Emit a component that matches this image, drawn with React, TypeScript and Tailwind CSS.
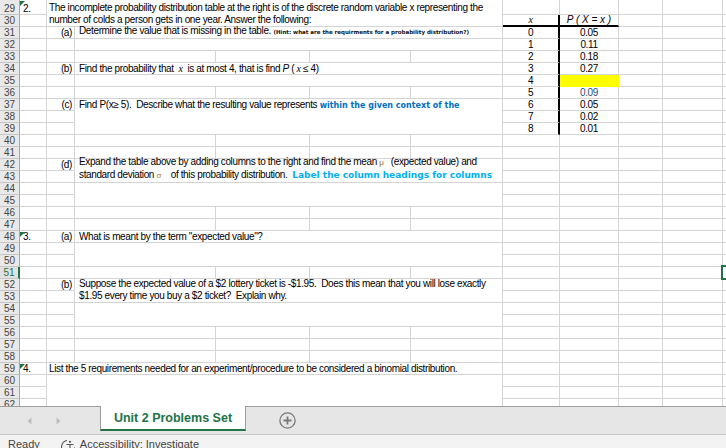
import React from 'react';

const CELL = 'box-border border-r border-b border-[#d4d4d4]';
const BOLD_BLUE = "font-['DejaVu_Sans',sans-serif] font-bold text-[8px] tracking-normal text-[#0070c0]";
const BOLD_CYAN = "font-['DejaVu_Sans',sans-serif] font-bold text-[9px] tracking-normal text-[#00b0f0]";
const HINT = "font-['DejaVu_Sans',sans-serif] font-bold text-[5.5px] tracking-normal text-[#111]";

function RowHeader({ n }: { n: number }) {
  if (n === 51) {
    return (
      <div className="box-border border-b border-[#c6c6c6] border-r-2 border-r-[#217346] bg-[#e1e1e1] text-[#217346] flex items-end justify-center leading-[11px] text-[10px] tracking-normal font-['Liberation_Sans',sans-serif]">
        {n}
      </div>
    );
  }
  return (
    <div className="box-border border-b border-r border-[#c6c6c6] border-r-[#a6a6a6] bg-[#e9e9e9] text-[#444] flex items-end justify-center leading-[11px] text-[10px] tracking-normal font-['Liberation_Sans',sans-serif]">
      {n}
    </div>
  );
}

function ColA({ n }: { n: number }) {
  const t = n === 29 ? '2.' : n === 48 ? '3.' : n === 59 ? '4.' : '';
  return (
    <div className={`${CELL} relative flex items-end pl-[3px] leading-[11px]`}>
      {t && (
        <span className="absolute left-0 top-[1px] w-0 h-0 border-t-[5px] border-r-[5px] border-t-[#217346] border-r-transparent" />
      )}
      {t}
    </div>
  );
}

function Empty() {
  return <div className={CELL} />;
}

function Label({ t }: { t: string }) {
  return <div className={`${CELL} flex items-end justify-end pr-[2px] leading-[11px] whitespace-pre`}>{t}</div>;
}

function Sep() {
  return (
    <>
      <Empty />
      <Empty />
      <Empty />
      <Empty />
      <Empty />
    </>
  );
}

const X = () => <i className="font-['Liberation_Serif',serif]">x</i>;
const P = () => <i>P</i>;

function BF({ n }: { n: number }) {
  switch (n) {
    case 29:
      return (
        <div className={`${CELL} col-span-5 row-span-2 flex flex-col justify-end pl-[2px] leading-[12px] whitespace-pre`}>
          <div>The incomplete probability distribution table at the right is of the discrete random variable x representing the</div>
          <div>number of colds a person gets in one year. Answer the following:</div>
        </div>
      );
    case 30:
    case 61:
    case 62:
      return null;
    case 31:
      return (
        <>
          <Label t="(a)" />
          <div className={`${CELL} col-span-4 flex items-end pl-[4px] leading-[11px] whitespace-pre`}>
            <span>
              Determine the value that is missing in the table.{' '}
              <span className={HINT}>(Hint: what are the requirments for a probability distribution?)</span>
            </span>
          </div>
        </>
      );
    case 32:
    case 35:
      return (
        <>
          <Empty />
          <div className={`${CELL} col-span-4`} />
        </>
      );
    case 34:
      return (
        <>
          <Label t="(b)" />
          <div className={`${CELL} col-span-4 flex items-end pl-[4px] leading-[11px] whitespace-pre`}>
            <span>
              Find the probability that  <X />  is at most 4, that is find <P /> ( <X /> ≤ 4)
            </span>
          </div>
        </>
      );
    case 37:
      return (
        <>
          <Label t="(c)" />
          <div className={`${CELL} col-span-4 row-span-3 pl-[4px] leading-[11px] whitespace-pre`}>
            <span>
              Find P(x≥ 5).  Describe what the resulting value represents{' '}
              <span className={BOLD_BLUE}>within the given context of the</span>
            </span>
          </div>
        </>
      );
    case 38:
    case 39:
    case 43:
    case 45:
    case 50:
    case 53:
    case 55:
      return <Empty />;
    case 42:
      return (
        <>
          <Label t="(d)" />
          <div className={`${CELL} col-span-4 row-span-2 flex flex-col justify-end pl-[4px] leading-[12px] whitespace-pre`}>
            <div>
              Expand the table above by adding columns to the right and find the mean{' '}
              <span className="text-[8px] text-[#8a6d3b]">μ</span>
              {'   (expected value) and'}
            </div>
            <div>
              standard deviation <span className="text-[8px] text-[#b07a3a]">σ</span>
              {'    of this probability distribution.  '}
              <span className={BOLD_CYAN}>Label the column headings for columns</span>
            </div>
          </div>
        </>
      );
    case 44:
    case 49:
    case 54:
      return (
        <>
          <Empty />
          <div className={`${CELL} col-span-4 row-span-2`} />
        </>
      );
    case 48:
      return (
        <>
          <Label t="(a)" />
          <div className={`${CELL} col-span-4 flex items-end pl-[4px] leading-[11px] whitespace-pre`}>
            What is meant by the term "expected value"?
          </div>
        </>
      );
    case 52:
      return (
        <>
          <Label t="(b)" />
          <div className={`${CELL} col-span-4 row-span-2 flex flex-col justify-end pl-[4px] leading-[12px] whitespace-pre`}>
            <div>Suppose the expected value of a $2 lottery ticket is -$1.95.  Does this mean that you will lose exactly</div>
            <div>$1.95 every time you buy a $2 ticket?  Explain why.</div>
          </div>
        </>
      );
    case 59:
      return (
        <div className={`${CELL} col-span-5 flex items-end pl-[2px] leading-[11px] whitespace-pre`}>
          List the 5 requirements needed for an experiment/procedure to be considered a binomial distribution.
        </div>
      );
    case 60:
      return <div className={`${CELL} col-span-5 row-span-3`} />;
    default:
      return <Sep />;
  }
}

const VALUES = ['0.05', '0.11', '0.18', '0.27', '', '0.09', '0.05', '0.02', '0.01'];

function Right({ n }: { n: number }) {
  let g: React.ReactNode;
  let h: React.ReactNode;
  if (n === 30) {
    g = (
      <div className="box-border border-r-2 border-b-2 border-black flex items-end justify-center leading-[10px] italic font-['Liberation_Serif',serif]">
        x
      </div>
    );
    h = (
      <div className="box-border border-r border-[#d4d4d4] border-b-2 border-b-black flex items-end justify-center leading-[10px] italic tracking-normal whitespace-pre">
        P ( X = x )
      </div>
    );
  } else if (n >= 31 && n <= 39) {
    const i = n - 31;
    g = (
      <div className="box-border border-b border-[#d4d4d4] border-r-2 border-r-black flex items-end justify-center leading-[11px]">
        {i}
      </div>
    );
    if (i === 4) {
      h = <div className="box-border border-r border-b border-[#ffff00] bg-[#ffff00]" />;
    } else if (i === 5) {
      h = <div className={`${CELL} flex items-end justify-center leading-[11px] text-[#1f4e79]`}>{VALUES[i]}</div>;
    } else {
      h = <div className={`${CELL} flex items-end justify-center leading-[11px]`}>{VALUES[i]}</div>;
    }
  } else {
    g = <Empty />;
    h = <Empty />;
  }
  return (
    <>
      {g}
      {h}
      <Empty />
      <Empty />
      {n === 51 ? (
        <div className={`${CELL} relative`}>
          <div className="absolute left-[-2px] top-[-2px] w-[110px] h-[15px] border-2 border-[#217346]" />
        </div>
      ) : (
        <Empty />
      )}
    </>
  );
}

const ROWS = Array.from({ length: 34 }, (_, i) => 29 + i);

export default function App() {
  return (
    <div className="w-[726px] h-[448px] overflow-hidden flex flex-col bg-white">
      <div className="h-[406px] shrink-0 overflow-hidden bg-white">
        <div className="grid w-[823px] grid-cols-[20px_27px_28px_141px_94px_101px_92px_57px_59px_44px_60px_100px] grid-rows-[15px_repeat(33,12px)] text-[10px] tracking-[-0.37px] text-black font-['Liberation_Sans',Arial,sans-serif]">
          {ROWS.map((n) => (
            <React.Fragment key={n}>
              <RowHeader n={n} />
              <ColA n={n} />
              <BF n={n} />
              <Right n={n} />
            </React.Fragment>
          ))}
        </div>
      </div>

      <div className="h-[29px] shrink-0 box-border border-t border-t-[#9e9e9e] border-b border-b-[#c6c6c6] bg-[#e6e6e6] flex items-center">
        <div className="w-[100px] flex items-center pl-[27px] gap-[24px]">
          <svg width="5" height="8" viewBox="0 0 5 8">
            <path d="M4.5 0.5 L0.5 4 L4.5 7.5 Z" fill="#bdbdbd" />
          </svg>
          <svg width="5" height="8" viewBox="0 0 5 8">
            <path d="M0.5 0.5 L4.5 4 L0.5 7.5 Z" fill="#bdbdbd" />
          </svg>
        </div>
        <div className="self-start -mt-px h-[25px] w-[146px] box-border bg-white border-l border-r border-[#9e9e9e] border-b-2 border-b-[#217346] flex items-center justify-center pt-[1px]">
          <span className="text-[12.5px] font-bold text-[#217346] font-['Liberation_Sans',sans-serif] leading-none">
            Unit 2 Problems Set
          </span>
        </div>
        <div className="ml-[33px] flex items-center">
          <svg width="17" height="17" viewBox="0 0 17 17">
            <circle cx="8.5" cy="8.5" r="7.6" fill="none" stroke="#7a7a7a" strokeWidth="1.3" />
            <path d="M8.5 4.5v8M4.5 8.5h8" stroke="#7a7a7a" strokeWidth="1.8" />
          </svg>
        </div>
      </div>

      <div className="flex-1 bg-[#f3f3f3] flex items-start pt-[3px] pl-[8px] text-[11px] leading-[13px] text-[#444] font-['Liberation_Sans',sans-serif]">
        <span>Ready</span>
        <svg className="ml-[21px] mt-[1px]" width="16" height="16" viewBox="0 0 16 16">
          <path d="M6 1.5 A6.5 6.5 0 0 0 2.5 12.5" fill="none" stroke="#555" strokeWidth="1.1" />
          <circle cx="9" cy="2.8" r="1.1" fill="#555" />
          <path d="M5.5 5.5h7M9 5.5v3.5M9 9l-2 4M9 9l2 4" fill="none" stroke="#555" strokeWidth="1.1" />
          <path d="M13.5 8.5 A6 6 0 0 1 12 12.5" fill="none" stroke="#555" strokeWidth="1.1" />
        </svg>
        <span className="ml-[3px]">Accessibility: Investigate</span>
      </div>
    </div>
  );
}
